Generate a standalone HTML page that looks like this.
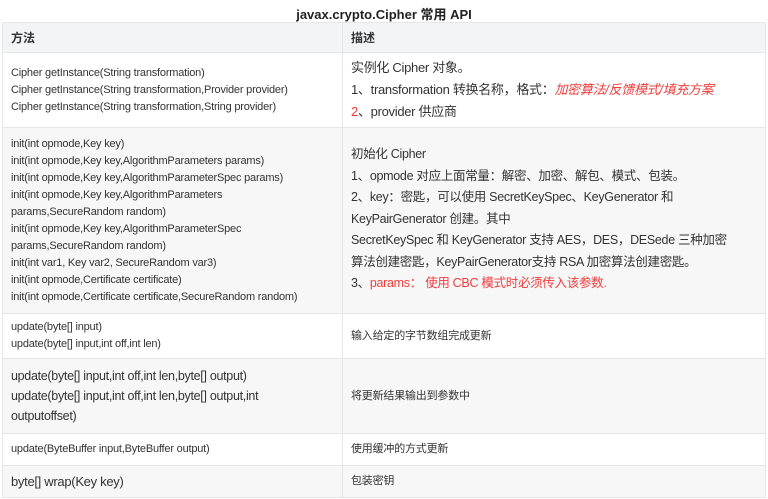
<!DOCTYPE html>
<html><head><meta charset="utf-8"><style>
*{margin:0;padding:0;box-sizing:border-box}
body{width:768px;height:499px;background:#fff;font-family:"Liberation Sans","Noto Sans CJK SC",sans-serif;color:#333;position:relative;overflow:hidden}
.t{position:absolute;top:4px;left:0;width:768px;text-align:center;font-weight:bold;font-size:13px;color:#222}
.r{position:absolute;left:2px;width:764px;border-top:1px solid #e6e6e6}
.c{position:absolute;top:0;bottom:0;display:flex;flex-direction:column;justify-content:center;padding-left:8px}
.a{left:0;width:341px;border-left:1px solid #e6e6e6;border-right:1px solid #e6e6e6}
.b{left:341px;width:423px;border-right:1px solid #e6e6e6}
.s{font-size:11px;line-height:17px;letter-spacing:-0.2px}
.m{font-size:13px;line-height:22px;letter-spacing:-0.3px}
.g{background:#f7f7f7}
.red{color:#f03c3c}
.h{font-weight:bold;font-size:12px;background:#f3f4f6}
</style></head><body>
<div class="t">javax.crypto.Cipher 常用 API</div>
<div class="r h" style="top:22px;height:30px"><div class="c a"><div>方法</div></div><div class="c b"><div>描述</div></div></div>
<div class="r" style="top:52px;height:75px"><div class="c a s"><div>Cipher getInstance(String transformation)<br>Cipher getInstance(String transformation,Provider provider)<br>Cipher getInstance(String transformation,String provider)</div></div>
<div class="c b m"><div style="white-space:nowrap">实例化 Cipher 对象。<br>1、transformation 转换名称，格式：<i class="red">加密算法/反馈模式/填充方案</i><br><span class="red">2</span>、provider 供应商</div></div></div>
<div class="r g" style="top:127px;height:186px"><div class="c a s"><div>init(int opmode,Key key)<br>init(int opmode,Key key,AlgorithmParameters params)<br>init(int opmode,Key key,AlgorithmParameterSpec params)<br>init(int opmode,Key key,AlgorithmParameters<br>params,SecureRandom random)<br>init(int opmode,Key key,AlgorithmParameterSpec<br>params,SecureRandom random)<br>init(int var1, Key var2, SecureRandom var3)<br>init(int opmode,Certificate certificate)<br>init(int opmode,Certificate certificate,SecureRandom random)</div></div>
<div class="c b m" style="font-size:12.5px;line-height:21.5px;padding-bottom:2px"><div style="white-space:nowrap">初始化 Cipher<br>1、opmode 对应上面常量：解密、加密、解包、模式、包装。<br>2、key：密匙，可以使用 SecretKeySpec、KeyGenerator 和<br>KeyPairGenerator 创建。其中<br>SecretKeySpec 和 KeyGenerator 支持 AES，DES，DESede 三种加密<br>算法创建密匙，KeyPairGenerator支持 RSA 加密算法创建密匙。<br>3、<span class="red">params： 使用 CBC 模式时必须传入该参数.</span></div></div></div>
<div class="r" style="top:313px;height:45px"><div class="c a s"><div>update(byte[] input)<br>update(byte[] input,int off,int len)</div></div><div class="c b s"><div>输入给定的字节数组完成更新</div></div></div>
<div class="r g" style="top:358px;height:75px"><div class="c a m" style="font-size:12.5px;line-height:20px"><div>update(byte[] input,int off,int len,byte[] output)<br>update(byte[] input,int off,int len,byte[] output,int<br>outputoffset)</div></div><div class="c b s"><div>将更新结果输出到参数中</div></div></div>
<div class="r" style="top:433px;height:32px"><div class="c a s"><div>update(ByteBuffer input,ByteBuffer output)</div></div><div class="c b s"><div>使用缓冲的方式更新</div></div></div>
<div class="r g" style="top:465px;height:33px;border-bottom:1px solid #e6e6e6"><div class="c a m"><div>byte[] wrap(Key key)</div></div><div class="c b s"><div>包装密钥</div></div></div>
</body></html>
